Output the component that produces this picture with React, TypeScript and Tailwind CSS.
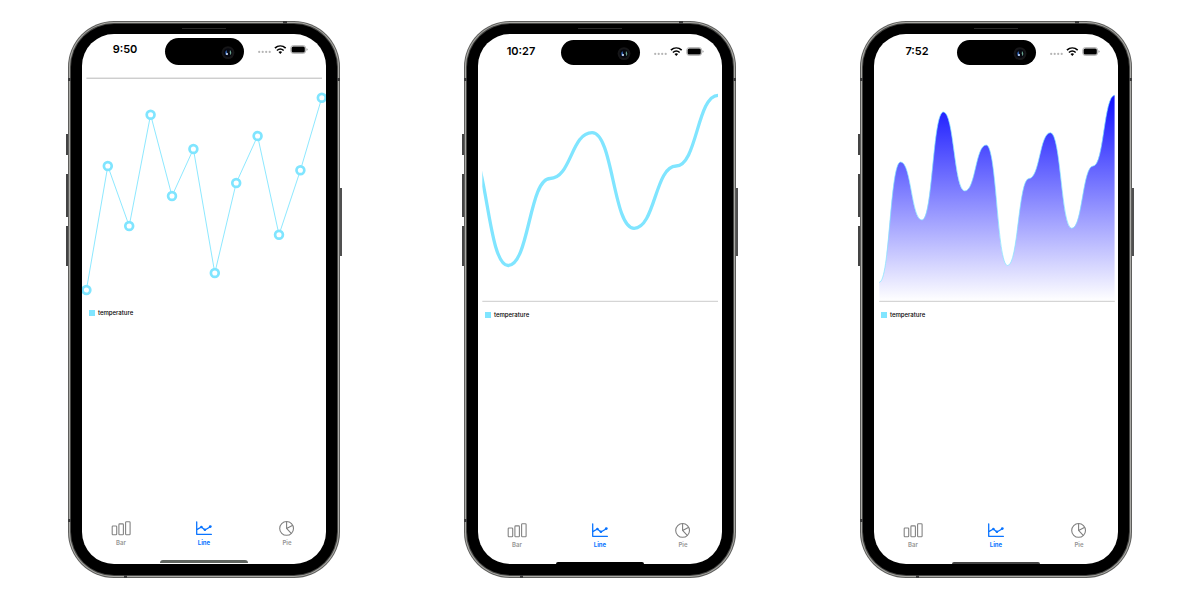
import React, { useId } from "react";

type Point = [number, number];
type Variant = "plain" | "curve" | "filled";

const STROKE = "#80e5ff";

function smoothPath(points: Point[]): string {
  return points
    .map(([x, y], i) => {
      if (i === 0) return `M${x} ${y}`;
      const [px, py] = points[i - 1];
      const mid = (px + x) / 2;
      return `C${mid} ${py} ${mid} ${y} ${x} ${y}`;
    })
    .join("");
}

const plainY = [216, 92, 152, 40.7, 122, 75, 199, 109, 62, 160.7, 96.3, 23.7];
const smoothY = [208.3, 88, 146, 38, 117, 71, 191.5, 104.5, 58.7, 154.3, 92, 21.3];

const plainPoints = plainY.map((y, i): Point => [4.4 + i * 21.4, y]);
const zoomedPoints = smoothY.slice(5).map((y, i): Point => [-11.9 + i * 42, y]);
const filledPoints = smoothY.map((y, i): Point => [5.2 + i * 21.4, y]);

function LineChart({ variant }: { variant: Variant }) {
  const id = useId();
  return (
    <svg viewBox="0 0 244 232" className="block w-full" role="img" aria-label="Temperature line chart">
      {variant === "plain" && (
        <>
          <path d="M4.4 4.2H240" stroke="#b9b9b9" strokeWidth="1" />
          <polyline points={plainPoints.join(" ")} fill="none" stroke={STROKE} strokeWidth="0.9" />
          {plainPoints.map(([x, y]) => (
            <circle key={x} cx={x} cy={y} r="3.9" fill="#fff" stroke={STROKE} strokeWidth="2.7" />
          ))}
        </>
      )}
      {variant === "curve" && (
        <>
          <clipPath id={id}>
            <path d="M4.3 0H240V232H4.3Z" />
          </clipPath>
          <path d={smoothPath(zoomedPoints)} fill="none" stroke={STROKE} strokeWidth="3.3" clipPath={`url(#${id})`} />
          <path d="M4.3 227.3H240" stroke="#cbcbcb" strokeWidth="1" />
        </>
      )}
      {variant === "filled" && (
        <>
          <linearGradient id={id} gradientUnits="userSpaceOnUse" x1="0" y1="21" x2="0" y2="227">
            <stop offset="0" stopColor="#0f0fff" />
            <stop offset="1" stopColor="#ffffff" />
          </linearGradient>
          <path d={`${smoothPath(filledPoints)}V227H5.2Z`} fill={`url(#${id})`} />
          <path d={smoothPath(filledPoints)} fill="none" stroke={STROKE} strokeWidth="0.7" />
          <path d="M5.2 227.3H240.8" stroke="#cbcbcb" strokeWidth="1" />
        </>
      )}
    </svg>
  );
}

function BarIcon() {
  return (
    <svg viewBox="0 0 20 16" className="h-4 w-5" fill="none" stroke="#838383" strokeWidth="1.1">
      <rect x="1.2" y="6" width="4.5" height="8.7" rx="0.8" />
      <rect x="7.9" y="3.9" width="4.5" height="10.8" rx="0.8" />
      <rect x="14.6" y="1.7" width="4.5" height="13" rx="0.8" />
    </svg>
  );
}

function LineIcon() {
  return (
    <svg viewBox="0 0 20 16" className="h-4 w-5" fill="none" stroke="#0a74ff" strokeWidth="1.3" strokeLinecap="round" strokeLinejoin="round">
      <path d="M2.7 1.8V14.3H17.4" />
      <path d="M3.2 9.4L7.4 7L10.9 10L16.4 6.7" />
      <g fill="#0a74ff" stroke="none">
        <circle cx="7.4" cy="7" r="1.3" />
        <circle cx="10.9" cy="9.8" r="1.3" />
        <circle cx="16.3" cy="6.6" r="1.4" />
      </g>
    </svg>
  );
}

function PieIcon() {
  return (
    <svg viewBox="0 0 20 16" className="h-4 w-5" fill="none" stroke="#808080" strokeWidth="1.1">
      <circle cx="9.6" cy="8.4" r="6.9" />
      <path d="M9.6 1.5V8.4L15.8 5.2M9.6 8.4L14.2 13.3" strokeLinejoin="round" />
    </svg>
  );
}

function SystemIcons() {
  return (
    <svg viewBox="0 0 52 12" className="h-3 w-[52px]">
      <g fill="#b5b5b5">
        <circle cx="1.2" cy="8.9" r="1.1" />
        <circle cx="4.7" cy="8.9" r="1.1" />
        <circle cx="8.2" cy="8.9" r="1.1" />
        <circle cx="11.7" cy="8.9" r="1.1" />
      </g>
      <g fill="none" stroke="#000" strokeWidth="1.6">
        <path d="M16.9 5.2C20.1 2.2 24.5 2.2 27.7 5.2" />
        <path d="M18.9 7.5C20.9 5.7 23.7 5.7 25.7 7.5" />
      </g>
      <path d="M20.5 9Q22.3 7.6 24.1 9L22.3 11Z" />
      <rect x="32.8" y="2.6" width="14.8" height="7.8" rx="2.4" fill="#fff" stroke="#b3b3b3" strokeWidth="1" />
      <rect x="33.6" y="3.4" width="13.2" height="6.2" rx="1.5" />
      <path d="M48.4 5.3Q49.8 5.5 49.8 6.5Q49.8 7.5 48.4 7.7Z" fill="#a5a5a5" />
    </svg>
  );
}

const tabs = [
  { name: "Bar", Icon: BarIcon },
  { name: "Line", Icon: LineIcon },
  { name: "Pie", Icon: PieIcon },
];

type PhoneProps = {
  time: string;
  variant: Variant;
  raised?: boolean;
  homeBar: string;
};

function Phone({ time, variant, raised = false, homeBar }: PhoneProps) {
  return (
    <section className="relative w-[272px] shrink-0">
      <span className="absolute -left-0.5 top-[113px] h-[21px] w-0.5 bg-[#444]" />
      <span className="absolute -left-0.5 top-[153px] h-[43px] w-0.5 bg-[#444]" />
      <span className="absolute -left-0.5 top-[205px] h-[40px] w-0.5 bg-[#444]" />
      <span className="absolute -right-0.5 top-[167px] h-[68px] w-0.5 bg-[#505050]" />
      <div className="rounded-[46px] bg-[#5e5e5c] p-px">
        <div className="rounded-[45px] bg-[#aaaaa6] p-px">
          <div className="rounded-[44px] bg-[#484846] p-px">
            <div className="rounded-[43px] bg-black px-[11px] pt-[10px] pb-[11px]">
              <div className="flex h-[530px] flex-col overflow-hidden rounded-[32px] bg-white">
                <header className={`flex h-10 items-start ${raised ? "pt-1" : "pt-1.5"}`}>
                  <time className="mt-[3px] w-[83px] pl-[3px] text-center text-[11px] leading-4 font-semibold">{time}</time>
                  <div className={`flex w-[79px] items-center justify-end rounded-full bg-black pr-[9px] ${raised ? "h-[27px]" : "h-[25px]"}`}>
                    <svg viewBox="0 0 14 14" className="h-[14px] w-[14px]">
                      <circle cx="7" cy="7.6" r="6.4" fill="#161618" />
                      <circle cx="7" cy="7.6" r="4.4" fill="#07080f" />
                      <path d="M5.3 5Q3.4 7.1 4.6 9.8L6.4 10.2L6 7.2Z" fill="#2d62b5" />
                      <circle cx="6" cy="9" r="1" fill="#d7e6ff" />
                      <path d="M9 4.9Q11.2 7.2 9.6 10.2L8.7 7.6Z" fill="#6ba590" />
                    </svg>
                  </div>
                  <div className="mt-[5px] ml-[14px]">
                    <SystemIcons />
                  </div>
                </header>
                <LineChart variant={variant} />
                <p className={`flex items-center gap-[3px] pl-[7px] text-[6px] leading-[8px] font-medium ${raised ? "pt-[3px]" : "pt-[5px]"}`}>
                  <span className="h-[6px] w-[6px] bg-[#80e5ff]" />
                  temperature
                </p>
                <nav className="mt-auto flex justify-between px-[27px] pb-[13px]">
                  {tabs.map(({ name, Icon }) => (
                    <button
                      key={name}
                      type="button"
                      className={`flex w-6 flex-col items-center gap-[3px] text-[6px] leading-[8px] ${name === "Line" ? "font-bold text-[#0a74ff]" : "font-semibold text-[#949494]"}`}
                    >
                      <Icon />
                      {name}
                    </button>
                  ))}
                </nav>
                <div className={`w-[88px] self-center rounded-t-sm ${homeBar}`} />
              </div>
            </div>
          </div>
        </div>
      </div>
      <span className="absolute top-[7px] left-1/2 h-px w-11 -translate-x-1/2 bg-[#2a2a2a]" />
      <span className="absolute top-0 left-[215px] h-[3px] w-1 bg-[#3a3a3a]" />
      <span className="absolute bottom-0 left-[56px] h-[3px] w-[3px] bg-[#3a3a3a]" />
      <span className="absolute top-[57px] left-0 h-[3px] w-[3px] bg-[#3a3a3a]" />
      <span className="absolute top-[57px] right-0 h-[3px] w-[3px] bg-[#3a3a3a]" />
      <span className="absolute top-[498px] left-0 h-[3px] w-[3px] bg-[#3a3a3a]" />
    </section>
  );
}

export default function App() {
  return (
    <main className="flex min-h-screen items-start justify-between gap-10 bg-white px-[68px] pt-[21px] font-['Inter',sans-serif] text-black">
      <Phone time="9:50" variant="plain" raised homeBar="mb-px h-[3px] bg-[#606560]" />
      <Phone time="10:27" variant="curve" homeBar="h-0.5 bg-black" />
      <Phone time="7:52" variant="filled" homeBar="h-0.5 bg-[#444]" />
    </main>
  );
}
